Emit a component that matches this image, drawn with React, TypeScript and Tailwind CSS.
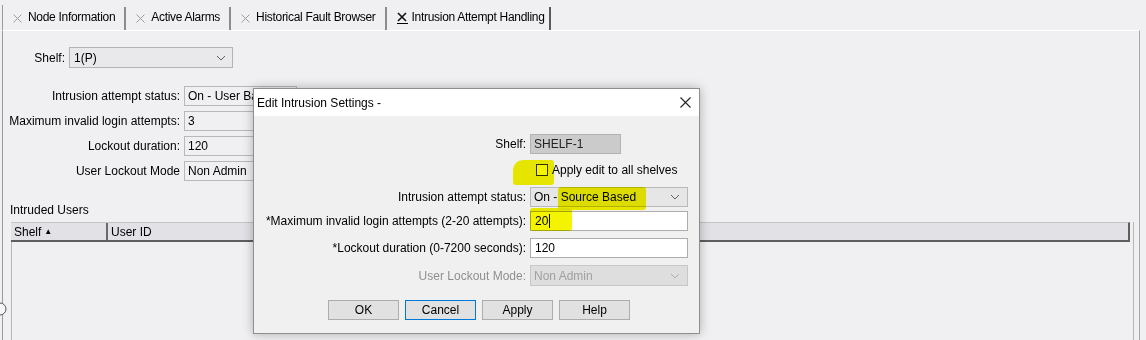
import React from "react";

const Chevron = ({ color = "#606060" }: { color?: string }) => (
  <svg width="10" height="6" viewBox="0 0 10 6" className="shrink-0">
    <polyline points="1,1 5,5 9,1" fill="none" stroke={color} strokeWidth="1" />
  </svg>
);

const TabX = ({ active }: { active?: boolean }) =>
  active ? (
    <span className="flex flex-col items-center mr-[4px] mt-[2px]">
      <svg width="10" height="10" viewBox="0 0 10 10">
        <path d="M1 1L9 9M9 1L1 9" stroke="#111" strokeWidth="1.6" fill="none" />
      </svg>
      <span className="block w-[11px] h-[1px] bg-black mt-[1px]" />
    </span>
  ) : (
    <svg width="9" height="9" viewBox="0 0 9 9" className="mr-[6px] mt-[2px]">
      <path d="M0.5 0.5L8.5 8.5M8.5 0.5L0.5 8.5" stroke="#9c9c9c" strokeWidth="1" fill="none" />
    </svg>
  );

const Tab = ({ label, active }: { label: string; active?: boolean }) => (
  <div className="flex h-full">
    <div className={`flex items-center pt-[4px] ${active ? "pl-[10px] pr-[4px]" : "pl-[10px] pr-[9px]"}`}>
      <TabX active={active} />
      <span className="whitespace-nowrap tracking-[-0.3px]">{label}</span>
    </div>
    <div className={`self-end w-[2px] h-[23px] ${active ? "bg-[#5a5a5a]" : "bg-[#8c8c8c]"}`} />
  </div>
);

export default function App() {
  const leftField = "h-[20px] w-[113px] border border-[#b8b8b8] bg-[#f0eff2] flex items-center pl-[3px] whitespace-nowrap overflow-hidden";
  const dlgField = "h-[20px] w-[158px] border border-[#adadad] bg-white flex items-center pl-[4px] whitespace-nowrap";
  const btn = "w-[71px] h-[20px] bg-[#e1e1e1] border border-[#adadad] flex items-center justify-center";

  return (
    <div className="relative w-[1146px] h-[340px] overflow-hidden bg-[#f0eff2] text-[12px] leading-[14px] text-black font-['Liberation_Sans',Arial,sans-serif]">
      {/* Tab strip */}
      <div className="flex h-[30px] pl-[2px]">
        <div className="self-end w-[1px] h-[25px] bg-[#9a9a9a]" />
        <Tab label="Node Information" />
        <Tab label="Active Alarms" />
        <Tab label="Historical Fault Browser" />
        <Tab label="Intrusion Attempt Handling" active />
      </div>

      {/* Main panel */}
      <div className="ml-[2px] mr-[6px] h-[310px] border-l border-[#9a9a9a] border-r border-r-[#a8a8a8] border-t border-t-white flex flex-col">
        {/* Shelf row */}
        <div className="flex items-center mt-[16px]">
          <div className="w-[62px] text-right">Shelf:</div>
          <div className="ml-[4px] h-[21px] w-[164px] border border-[#b4b4b4] bg-[#e9e8eb] flex items-center justify-between pl-[4px] pr-[6px]">
            <span>1(P)</span>
            <Chevron />
          </div>
        </div>

        {/* Form */}
        <div className="mt-[18px] flex flex-col gap-[5px]">
          {[
            ["Intrusion attempt status:", "On - User Ba"],
            ["Maximum invalid login attempts:", "3"],
            ["Lockout duration:", "120"],
            ["User Lockout Mode", "Non Admin"],
          ].map(([l, v]) => (
            <div key={l} className="flex items-center">
              <div className="w-[177px] text-right whitespace-nowrap">{l}</div>
              <div className={`ml-[4px] ${leftField}`}>{v}</div>
            </div>
          ))}
        </div>

        {/* Intruded users */}
        <div className="mt-[22px] pl-[7px]">Intruded Users</div>
        <div className="mt-[5px] ml-[8px] mr-[5px] flex-1 border-r border-[#b5b5b5] flex flex-col">
          <div className="flex h-[20px] bg-[#e2e1e5] border-t border-[#c4c4c4] border-b-2 border-b-[#5e5e5e] border-r-2 border-r-[#5e5e5e] mr-[3px]">
            <div className="w-[97px] border-r-2 border-[#6a6a6a] flex items-center pl-[3px]">
              <span>Shelf</span>
              <span className="ml-[3px] text-[8px]">▲</span>
            </div>
            <div className="flex items-center pl-[3px]">User ID</div>
          </div>
          <div className="flex-1 border-l border-[#b5b5b5]" />
        </div>
      </div>

      {/* left-edge artifact */}
      <svg className="absolute left-[-7px] top-[302px]" width="14" height="14" viewBox="0 0 14 14">
        <circle cx="7" cy="7" r="6" fill="#f7f7f7" stroke="#555" strokeWidth="1" />
      </svg>

      {/* Dialog */}
      <div className="absolute left-[253px] top-[88px] w-[447px] h-[246px] border border-[#8e8e8e] bg-[#f0f0f0] shadow-[0_0_10px_rgba(0,0,0,0.28)] flex flex-col">
        <div className="h-[27px] bg-white flex items-center justify-between pl-[3px] pr-[8px] shrink-0">
          <span className="text-[12px]">Edit Intrusion Settings -</span>
          <svg width="11" height="11" viewBox="0 0 11 11">
            <path d="M0.5 0.5L10.5 10.5M10.5 0.5L0.5 10.5" stroke="#222" strokeWidth="1.1" fill="none" />
          </svg>
        </div>

        <div className="flex flex-col">
          <div className="flex items-center mt-[18px]">
            <div className="w-[272px] text-right">Shelf:</div>
            <div className="ml-[4px] h-[20px] w-[91px] border border-[#b3b3b3] bg-[#cbcbcb] flex items-center pl-[3px] text-[#222]">SHELF-1</div>
          </div>

          <div className="flex items-center mt-[9px] pl-[282px]">
            <div className="w-[12px] h-[12px] border border-[#333] bg-white" />
            <span className="ml-[4px]">Apply edit to all shelves</span>
          </div>

          <div className="flex items-center mt-[10px]">
            <div className="w-[272px] text-right">Intrusion attempt status:</div>
            <div className="ml-[4px] h-[20px] w-[158px] border border-[#b9b9b9] bg-[#e6e6e6] flex items-center justify-between pl-[3px] pr-[7px]">
              <span>On - Source Based</span>
              <Chevron />
            </div>
          </div>

          <div className="flex items-center mt-[4px]">
            <div className="w-[272px] text-right whitespace-nowrap">*Maximum invalid login attempts (2-20 attempts):</div>
            <div className={`ml-[4px] ${dlgField}`}>
              <span>20</span>
              <span className="w-[1px] h-[14px] bg-black ml-[1px]" />
            </div>
          </div>

          <div className="flex items-center mt-[7px]">
            <div className="w-[272px] text-right">*Lockout duration (0-7200 seconds):</div>
            <div className={`ml-[4px] ${dlgField}`}>120</div>
          </div>

          <div className="flex items-center mt-[7px]">
            <div className="w-[272px] text-right text-[#8f8f8f]">User Lockout Mode:</div>
            <div className="ml-[4px] h-[21px] w-[158px] border border-[#c8c8c8] bg-[#dedede] flex items-center justify-between pl-[3px] pr-[7px] text-[#a0a0a0]">
              <span>Non Admin</span>
              <Chevron color="#b0b0b0" />
            </div>
          </div>

          <div className="flex gap-[6px] mt-[14px] pl-[74px]">
            <div className={btn}>OK</div>
            <div className="w-[71px] h-[20px] bg-[#e1e1e1] border-[1.5px] border-[#0078d7] flex items-center justify-center">Cancel</div>
            <div className={btn}>Apply</div>
            <div className={btn}>Help</div>
          </div>
        </div>
      </div>

      {/* Highlighter marks */}
      <div className="absolute left-[513px] top-[160px] w-[41px] h-[25px] bg-[#f4f400] mix-blend-multiply rounded-[3px] rounded-tl-[10px]" />
      <div className="absolute left-[558px] top-[187px] w-[88px] h-[23px] bg-[#f4f400] mix-blend-multiply rounded-[3px]" />
      <div className="absolute left-[530px] top-[208px] w-[42px] h-[23px] bg-[#f4f400] mix-blend-multiply rounded-[3px]" />
    </div>
  );
}
